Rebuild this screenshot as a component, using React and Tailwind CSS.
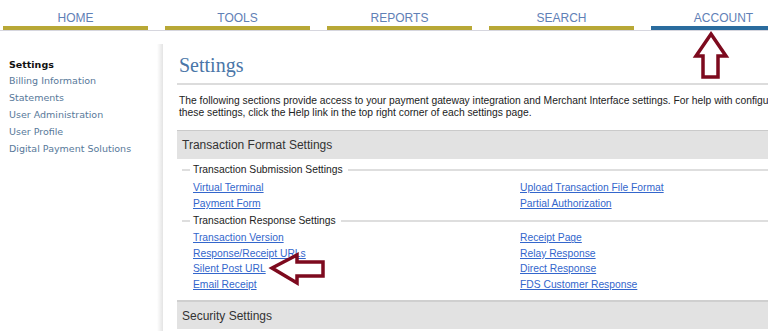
export default function App() {
  const tabs = ["HOME", "TOOLS", "REPORTS", "SEARCH", "ACCOUNT"];
  const side = ["Billing Information", "Statements", "User Administration", "User Profile", "Digital Payment Solutions"];
  const Link = ({ children }) => (
    <a href="#" className="text-[#3366cc] underline underline-offset-[1px] decoration-[#3366cc]">{children}</a>
  );
  const Legend = ({ children }) => (
    <div className="flex items-center h-[12px] ml-[5px]">
      <div className="w-[8px] h-[2px] bg-[#dedede]" />
      <div className="px-[3px] text-[10.3px] leading-[12px] text-[#222] whitespace-nowrap">{children}</div>
      <div className="flex-1 h-[2px] bg-[#dedede] ml-[2px]" />
    </div>
  );
  return (
    <div className="relative w-[768px] h-[331px] overflow-hidden bg-white font-['Liberation_Sans',Arial,sans-serif]">
      <nav className="flex gap-[17px] pl-[3px] border-b border-[#d6d6de] overflow-hidden">
        {tabs.map((t) => (
          <div
            key={t}
            className={
              "w-[145px] shrink-0 h-[30px] pt-[12px] text-center text-[12px] leading-[12px] text-[#5f80b6] border-b-4 " +
              (t === "ACCOUNT" ? "border-[#2a6c9e]" : "border-[#b8a836]")
            }
          >
            {t}
          </div>
        ))}
      </nav>
      <div className="flex">
        <aside className="w-[157px] shrink-0 pl-[9px] pt-[25.5px] font-['DejaVu_Sans',Verdana,sans-serif] text-[9.5px] leading-[16.9px]">
          <div className="font-bold text-[#111]">Settings</div>
          {side.map((s) => (
            <div key={s} className="text-[#58799a]">{s}</div>
          ))}
        </aside>
        <div className="w-[6px] shrink-0 mt-[13px] h-[300px] bg-gradient-to-r from-white to-[#e4e4e4]" />
        <main className="flex-1 min-w-0 pl-[14px]">
          <h1 className="pt-[22px] pl-[2px] pb-[6px] font-['Liberation_Serif',Georgia,serif] text-[20px] leading-[24px] text-[#4a76a8]">
            Settings
          </h1>
          <div className="h-[2px] bg-[#dcdcdc]" />
          <p className="mt-[10px] pl-[2px] text-[10.3px] leading-[11.7px] text-[#222] whitespace-nowrap">
            The following sections provide access to your payment gateway integration and Merchant Interface settings. For help with configuring
            <br />
            these settings, click the Help link in the top right corner of each settings page.
          </p>
          <div className="mt-[12px] h-[29px] border-t border-[#cacaca] bg-[#e2e2e2] pl-[5px] flex items-center text-[12px] text-[#333]">
            Transaction Format Settings
          </div>
          <div className="mt-[5px]">
            <Legend>Transaction Submission Settings</Legend>
            <div className="mt-[4px] pl-[16px] grid grid-cols-[327px_1fr] text-[10.3px] leading-[15.5px]">
              <div className="flex flex-col items-start">
                <Link>Virtual Terminal</Link>
                <Link>Payment Form</Link>
              </div>
              <div className="flex flex-col items-start">
                <Link>Upload Transaction File Format</Link>
                <Link>Partial Authorization</Link>
              </div>
            </div>
            <div className="mt-[4px]">
              <Legend>Transaction Response Settings</Legend>
            </div>
            <div className="mt-[3px] pl-[16px] grid grid-cols-[327px_1fr] text-[10.3px] leading-[15.4px]">
              <div className="flex flex-col items-start">
                <Link>Transaction Version</Link>
                <Link>Response/Receipt URLs</Link>
                <Link>Silent Post URL</Link>
                <Link>Email Receipt</Link>
              </div>
              <div className="flex flex-col items-start">
                <Link>Receipt Page</Link>
                <Link>Relay Response</Link>
                <Link>Direct Response</Link>
                <Link>FDS Customer Response</Link>
              </div>
            </div>
          </div>
          <div className="mt-[8px] h-[29px] border-t-2 border-[#cfcfcf] bg-[#e2e2e2] pl-[5px] flex items-center text-[12px] text-[#333]">
            Security Settings
          </div>
        </main>
      </div>
      <svg className="absolute inset-0 pointer-events-none" width="768" height="331" viewBox="0 0 768 331">
        <polygon
          points="711,34 726,56 718,56 718,77 703,77 703,56 696,56"
          fill="white"
          stroke="#7d0a1e"
          strokeWidth="3.5"
          strokeLinejoin="miter"
        />
        <polygon
          points="272,268 297,255 297,262 323,262 323,276 297,276 297,283"
          fill="white"
          stroke="#7d0a1e"
          strokeWidth="3.5"
          strokeLinejoin="miter"
        />
      </svg>
    </div>
  );
}
